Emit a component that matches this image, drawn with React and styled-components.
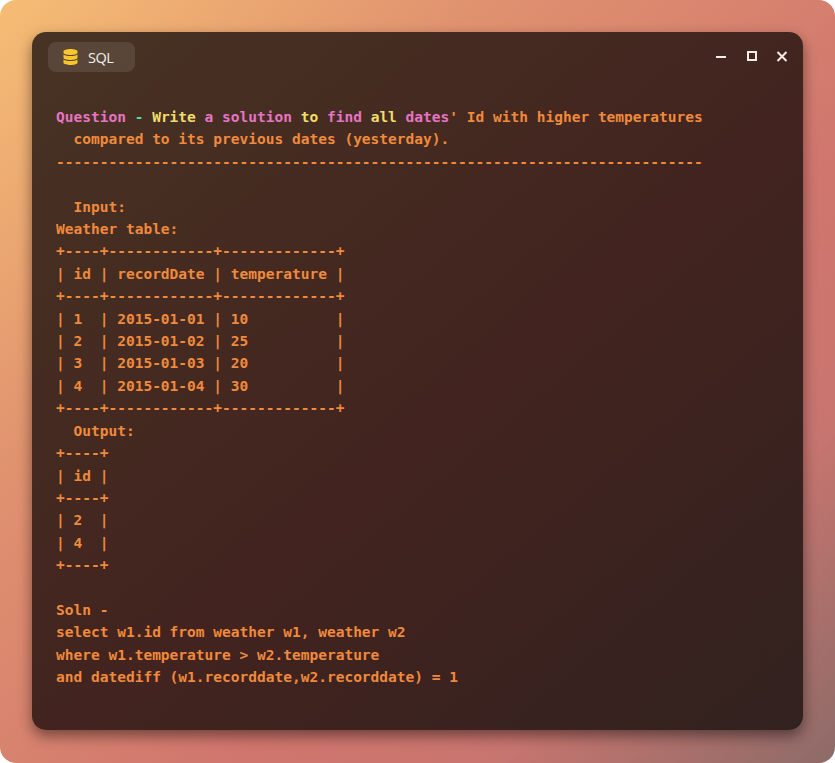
import React from "react";
import styled, { createGlobalStyle } from "styled-components";
import { FaDatabase } from "react-icons/fa";

const Global = createGlobalStyle`
  html, body { margin: 0; padding: 0; background: #fff; }
  #root { width: 835px; height: 763px; }
`;

const Page = styled.div`
  width: 835px;
  height: 763px;
  box-sizing: border-box;
  padding: 32px;
  border-radius: 16px;
  overflow: hidden;
  background: linear-gradient(135deg, #f6bd74 0%, #e0926f 30%, #d0766e 62%, #c9756f 78%, #8d6b68 100%);
`;

const Win = styled.div`
  height: 698px;
  width: 771px;
  border-radius: 14px;
  background: linear-gradient(140deg, #473323 0%, #42231f 55%, #32221f 100%);
  box-shadow: 0 6px 14px rgba(0, 0, 0, 0.45);
  display: flex;
  flex-direction: column;
`;

const TitleBar = styled.div`
  display: flex;
  align-items: center;
  justify-content: space-between;
  padding: 10px 15px 0 16px;
  height: 30px;
`;

const Tab = styled.div`
  width: 87px;
  height: 30px;
  box-sizing: border-box;
  padding-left: 15px;
  border-radius: 8px;
  background: rgba(255, 255, 255, 0.1);
  display: flex;
  align-items: center;
  gap: 10px;
  color: #f2f0ee;
  font: 400 14.5px "Open Sans", "Noto Sans", sans-serif;
  letter-spacing: -0.5px;
  svg { color: #f9c62c; width: 15px; height: 16px; }
`;

const Controls = styled.div`
  display: flex;
  align-items: center;
  gap: 18px;
`;

const Ctl = styled.svg`
  width: 12px;
  height: 12px;
  display: block;
  fill: none;
  stroke: #f3ece8;
  stroke-width: 2;
`;

const Code = styled.pre`
  margin: 0;
  padding: 34px 24px 0;
  font: 700 14.52px/22.4px "DejaVu Sans Mono", "Liberation Mono", monospace;
  color: #f18a3c;
  white-space: pre;
`;

const T = styled.span`
  color: ${(p) => p.$c};
`;

const pink = "#e774c4";
const teal = "#4fd6be";
const yellow = "#f0de6c";

const rest = `
  Input:
Weather table:
+----+------------+-------------+
| id | recordDate | temperature |
+----+------------+-------------+
| 1  | 2015-01-01 | 10          |
| 2  | 2015-01-02 | 25          |
| 3  | 2015-01-03 | 20          |
| 4  | 2015-01-04 | 30          |
+----+------------+-------------+
  Output:
+----+
| id |
+----+
| 2  |
| 4  |
+----+

Soln -
select w1.id from weather w1, weather w2
where w1.temperature > w2.temperature
and datediff (w1.recorddate,w2.recorddate) = 1`;

export default function App() {
  return (
    <Page>
      <Global />
      <Win>
        <TitleBar>
          <Tab>
            <FaDatabase />
            <span>SQL</span>
          </Tab>
          <Controls>
            <Ctl viewBox="0 0 12 12"><path d="M0 6h10" /></Ctl>
            <Ctl viewBox="0 0 12 12"><rect x="2" y="1" width="8" height="8" /></Ctl>
            <Ctl viewBox="0 0 12 12"><path d="M1.5 1l9 9M10.5 1l-9 9" /></Ctl>
          </Controls>
        </TitleBar>
        <Code>
          <T $c={pink}>{"Question "}</T>
          <T $c={teal}>{"- "}</T>
          <T $c={yellow}>{"Write "}</T>
          <T $c={pink}>{"a solution "}</T>
          <T $c={yellow}>{"to "}</T>
          <T $c={pink}>{"find "}</T>
          <T $c={yellow}>{"all "}</T>
          <T $c={pink}>{"dates"}</T>
          {`' Id with higher temperatures
  compared to its previous dates (yesterday).
--------------------------------------------------------------------------
`}
          {rest}
        </Code>
      </Win>
    </Page>
  );
}
